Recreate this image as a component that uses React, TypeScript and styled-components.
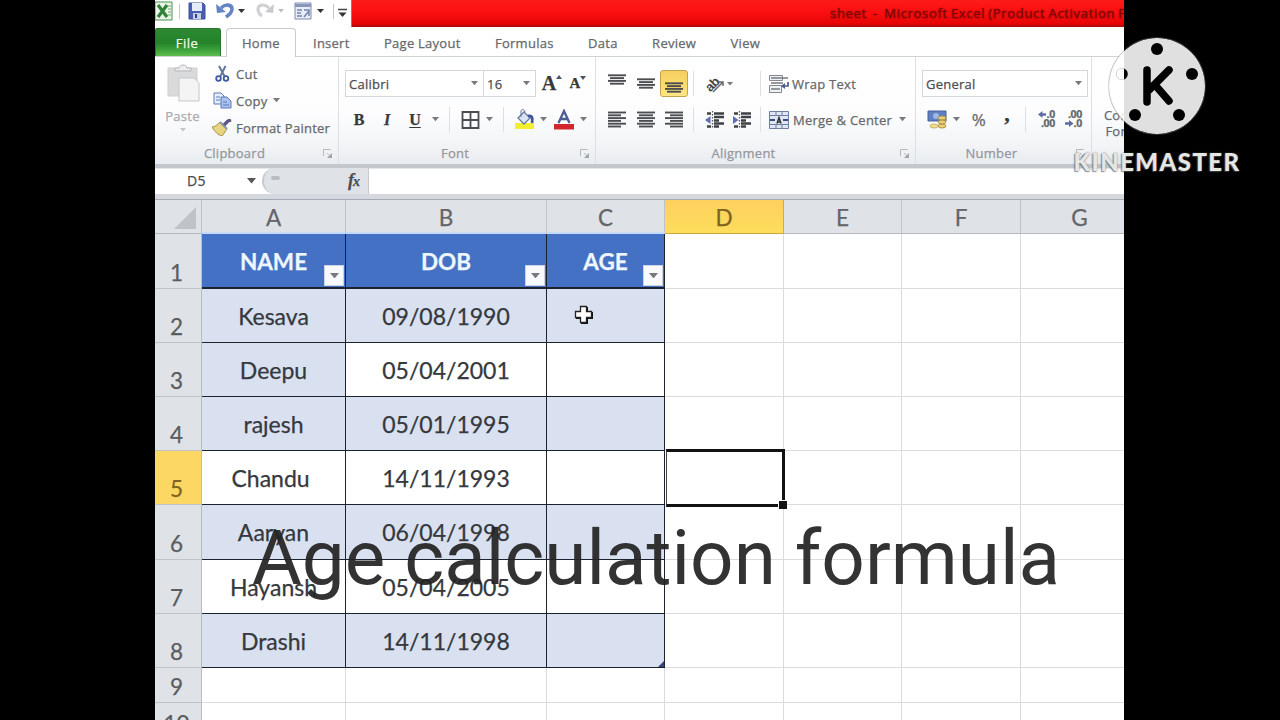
import React from 'react';
import styled, { createGlobalStyle, css } from 'styled-components';

const Global = createGlobalStyle`
  * { box-sizing: border-box; }
  body { margin: 0; background: #000; overflow: hidden; }
`;

const ui = `'Open Sans', 'Noto Sans', sans-serif`;
const sheetFont = `Lato, 'Liberation Sans', sans-serif`;

const Stage = styled.div`
  position: relative;
  width: 1280px;
  height: 720px;
  overflow: hidden;
  background: #000;
  padding-left: 155px;
`;
const Excel = styled.div`
  width: 969px;
  height: 720px;
  overflow: hidden;
  background: #fff;
  display: flex;
  flex-direction: column;
  font: 13px/16px ${ui};
  letter-spacing: 0.25px;
  -webkit-text-stroke: 0.25px currentColor;
  color: #66686c;
  white-space: nowrap;
`;

/* Title bar */
const TitleBar = styled.div`
  display: flex;
  height: 28px;
  flex: none;
`;
const QuickAccess = styled.div`
  width: 196px;
  height: 28px;
  display: flex;
  align-items: flex-start;
  svg { display: block; flex: none; }
`;
const Title = styled.div`
  flex: 1;
  height: 27px;
  padding: 5px 0 0 478px;
  overflow: hidden;
  background: linear-gradient(#ff1a1a, #fb1010 45%, #e60505 88%, #a80a0a);
  border-left: 1px solid #c96a6a;
  color: #7c0808;
  letter-spacing: 0.68px;
  word-spacing: -0.9px;
  text-shadow: 0 0 2px #a00000;
`;

/* Tabs */
const TabStrip = styled.div`
  display: flex;
  height: 29px;
  flex: none;
  border-bottom: 1px solid #cfd2d6;
`;
const FileTab = styled.div`
  width: 66px;
  height: 28px;
  margin-right: 5px;
  padding: 6px 2px 0 0;
  text-align: center;
  color: #eefbe9;
  letter-spacing: 0.5px;
  border-radius: 2px 3px 0 0;
  border: 1px solid #23772a;
  border-bottom: 0;
  background: linear-gradient(#2d8a33, #23822a 50%, #3fa53c 80%, #5fbd4e);
`;
const Tab = styled.div<{ $active?: boolean }>`
  height: 29px;
  padding: 7px 17.5px 0 17px;
  ${p => p.$active && css`
    width: 70px;
    padding: 6px 0 0 15px;
    background: #fff;
    border: 1px solid #c8cbd0;
    border-bottom: 0;
    border-radius: 4px 4px 0 0;
  `}
`;

/* Ribbon */
const Ribbon = styled.div`
  display: flex;
  flex: none;
  height: 107px;
  background: linear-gradient(#fff, #fdfdfe 50%, #f3f5f7 80%, #e9ecf0);
`;
const Group = styled.div<{ $w: number; $pad?: number }>`
  width: ${p => p.$w}px;
  flex: none;
  padding: 13px 0 0 ${p => p.$pad ?? 7}px;
  border-right: 1px solid #dcdfe3;
  display: flex;
  flex-direction: column;
`;
const Tools = styled.div`
  display: flex;
  align-items: center;
  height: 27px;
  margin-bottom: 9px;
  svg { display: block; flex: none; }
`;
const GroupFooter = styled.div<{ $pull?: number }>`
  display: flex;
  align-items: center;
  height: 21px;
  margin: auto 0 1px -${p => p.$pull ?? 7}px;
  color: #94979c;
`;
const GroupName = styled.span`
  flex: 1;
  text-align: center;
`;
const Slot = styled.span<{ $w: number; $on?: boolean }>`
  width: ${p => p.$w}px;
  height: 27px;
  flex: none;
  display: flex;
  align-items: center;
  justify-content: center;
  ${p => p.$on && css`
    border: 1px solid #c2a24f;
    border-radius: 3px;
    background: linear-gradient(#f6cf62, #fbdb6c 60%, #fde68a);
  `}
`;
const Letter = styled(Slot)<{ $size?: number; $italic?: boolean; $underline?: boolean }>`
  font: bold ${p => p.$size ?? 16}px 'Liberation Serif', serif;
  font-style: ${p => (p.$italic ? 'italic' : 'normal')};
  text-decoration: ${p => (p.$underline ? 'underline' : 'none')};
  text-underline-offset: 2px;
  color: #37383b;
  letter-spacing: 0;
`;
const Rule = styled.span`
  width: 1px;
  height: 25px;
  flex: none;
  background: #dcdfe3;
`;
const Gap = styled.span<{ $w: number }>`
  width: ${p => p.$w}px;
  flex: none;
`;
const Combo = styled.div<{ $w: number }>`
  width: ${p => p.$w}px;
  height: 27px;
  flex: none;
  display: flex;
  align-items: center;
  justify-content: space-between;
  padding: 0 5px 0 3px;
  margin-right: -1px;
  border: 1px solid #d3d6da;
  background: #fff;
  color: #4c4d50;
`;
const ClipboardBody = styled.div`
  display: flex;
  height: 82px;
  margin-top: -6px;
`;
const PasteButton = styled.div`
  width: 55px;
  display: flex;
  flex-direction: column;
  align-items: center;
  color: #a9abae;
  svg { display: block; }
`;
const PasteLabel = styled.span`
  margin: 4px 0 4px;
`;
const ClipList = styled.div`
  display: flex;
  flex-direction: column;
  margin-top: -4px;
`;
const ClipItem = styled.div`
  display: flex;
  align-items: center;
  height: 27px;
  svg { flex: none; }
`;
const ClipIcon = styled.span`
  display: flex;
  justify-content: center;
  width: 24px;
  margin-right: 2px;
`;
const Stacked = styled.div`
  width: 96px;
  flex: none;
  padding: 51px 0 0;
  text-align: center;
  line-height: 15.5px;
`;

/* Formula bar */
const FormulaBar = styled.div`
  display: flex;
  flex: none;
  height: 35px;
  border-top: 4px solid #c3c8ce;
  border-bottom: 5px solid #d5d9df;
  box-shadow: inset 0 1px 0 #e3e6ea;
`;
const NameBox = styled.div`
  width: 107px;
  padding: 0 6px 0 32px;
  display: flex;
  align-items: center;
  justify-content: space-between;
  font-size: 14px;
  color: #4c4d50;
`;
const FxArea = styled.div`
  width: 107px;
  display: flex;
  align-items: center;
  justify-content: space-between;
  padding: 0 9px 0 7px;
  background: #dfe3e8;
  border: 1px solid #c5cad0;
  border-width: 0 1px 0 2px;
  border-radius: 13px 0 0 13px;
`;
const Fx = styled.span`
  font: italic bold 18px/20px 'Liberation Serif', serif;
  letter-spacing: -1px;
  color: #4c4e52;
  small { font-size: 14px; }
`;
const Nub = styled.span`
  width: 9px;
  height: 4px;
  margin-top: -6px;
  border-radius: 2px;
  background: #b9bdc3;
`;

/* Sheet */
const Sheet = styled.div`
  display: flex;
  flex-direction: column;
  font-family: ${sheetFont};
  letter-spacing: 0;
  border-top: 1px solid #a5a9b0;
`;
const SheetRow = styled.div<{ $h: number }>`
  display: grid;
  grid-template-columns: 47px 144px 201px 118px 119px 118px 119px 118px;
  height: ${p => p.$h}px;
  flex: none;
`;
const ColHead = styled.div<{ $on?: boolean; $table?: boolean }>`
  display: flex;
  align-items: center;
  justify-content: center;
  padding-top: ${p => (p.$table ? 4 : 3)}px;
  font-size: 22.5px;
  color: ${p => (p.$on ? '#7d6420' : '#63656a')};
  background: ${p => (p.$on ? 'linear-gradient(#fdd05e, #fedd5c)' : '#dfe2e6')};
  border-right: 1px solid ${p => (p.$on ? '#d9a93a' : '#bfc3c9')};
  border-bottom: ${p => (p.$table ? '2px solid #c4daf6' : `1px solid ${p.$on ? '#cfa53d' : '#b5b9bf'}`)};
`;
const Corner = styled(ColHead)`
  justify-content: flex-end;
  align-items: flex-end;
  padding: 0 5px 4px 0;
`;
const RowHead = styled.div<{ $on?: boolean; $cut?: boolean }>`
  display: flex;
  align-items: flex-end;
  justify-content: center;
  padding: 0 3px ${p => (p.$cut ? 1 : 3)}px 0;
  font-size: 22.5px;
  line-height: 25px;
  color: ${p => (p.$on ? '#7d6420' : '#5a5c60')};
  background: ${p => (p.$on ? '#fdd763' : '#dfe2e6')};
  border-right: 1px solid #b9bdc3;
  border-bottom: 1px solid #c0c4ca;
`;
const Cell = styled.div<{ $kind: 'head' | 'band' | 'plain' | 'empty' }>`
  position: relative;
  display: flex;
  align-items: center;
  justify-content: center;
  font-size: 23px;
  color: #35383d;
  white-space: pre;
  border-right: 1px solid #dadcdf;
  border-bottom: 1px solid #dadcdf;
  ${p => p.$kind !== 'empty' && css`
    border-color: #1d232e;
    background: ${p.$kind === 'band' ? '#d9e1f0' : '#fff'};
  `}
  ${p => p.$kind === 'head' && css`
    background: #4471c4;
    color: #eef6ff;
    font-size: 22.5px;
    font-weight: 700;
    padding-top: 3px;
    border-bottom-width: 2px;
  `}
`;
const FilterButton = styled.span`
  position: absolute;
  right: 1px;
  bottom: 1px;
  width: 20px;
  height: 21px;
  display: flex;
  align-items: center;
  justify-content: center;
  background: #f7f9fc;
  border: 1px solid #c9d3e4;
`;
const Selection = styled.div`
  position: absolute;
  z-index: 1;
  left: 1px;
  top: -2px;
  width: 119px;
  height: 58px;
  border: 3px solid #121212;
  border-left: 1px solid #444;
  &::after {
    content: '';
    position: absolute;
    right: -5px;
    bottom: -5px;
    width: 8px;
    height: 8px;
    background: #121212;
    border: solid #fff;
    border-width: 1px 0 0 1px;
  }
`;
const TableGrip = styled.span`
  position: absolute;
  right: 0;
  bottom: 0;
  border: 3px solid #33437c;
  border-top-color: transparent;
  border-left-color: transparent;
`;
const CrossCursor = styled.svg`
  position: absolute;
  left: 26px;
  top: 15px;
`;

/* Video overlays */
const Caption = styled.div`
  position: absolute;
  left: 252px;
  top: 513px;
  font: 400 76.4px/90px Roboto, sans-serif;
  color: rgba(36, 36, 36, 0.93);
  white-space: nowrap;
`;
const Watermark = styled.div`
  position: absolute;
  left: 1067px;
  top: 34px;
  width: 180px;
  display: flex;
  flex-direction: column;
  align-items: center;
`;
const Brand = styled.div`
  margin-top: 8px;
  font: 900 24px/32px Lato, sans-serif;
  letter-spacing: 1.4px;
  color: #e6e6e6;
  text-shadow: 0 0 2px rgba(90, 90, 90, 0.8), -1px 1px 1px rgba(90, 90, 90, 0.6);
  white-space: nowrap;
`;

const PercentSign = styled.span`
  font-size: 17px;
`;
const Comma = styled.span`
  margin-top: -12px;
`;
const Decimals = styled.span`
  display: flex;
  flex-direction: column;
  align-items: flex-end;
  width: 20px;
  margin-top: -2px;
  font: bold 10.5px/9px 'Open Sans', sans-serif;
  letter-spacing: -0.3px;
`;
const DecimalRow = styled.span`
  display: flex;
  align-items: center;
`;

const Arrow = ({ w = 7, c = '#77797d' }: { w?: number; c?: string }) => (
  <svg width={w} height={w * 0.6} viewBox="0 0 10 6"><path d="M0 0h10L5 6z" fill={c} /></svg>
);
const Launcher = () => (
  <svg width="24" height="12" viewBox="0 0 24 12" fill="none" stroke="#b4b7bb">
    <path d="M9.500 9V2.500h7M13 6l4 4" /><path d="M18 6v5h-5z" fill="#a0a3a8" stroke="none" />
  </svg>
);
const ShiftArrow = ({ right }: { right?: boolean }) => (
  <svg width="9" height="7" viewBox="0 0 9 7">
    <path d={right ? 'M8.500 3.500L4 0v2.300H0v2.400h4V7z' : 'M0 3.500L4.500 0v2.300H8v2.400H4.500V7z'} fill="#5f6aa6" />
  </svg>
);

const lineSets: Record<string, number[][]> = {
  top: [[0, 18], [2, 16], [0, 18], [2, 16]],
  left: [[0, 18], [0, 13], [0, 18], [0, 13], [0, 18], [0, 13]],
  center: [[0, 18], [2, 16], [0, 18], [2, 16], [0, 18], [2, 16]],
  right: [[0, 18], [5, 18], [0, 18], [5, 18], [0, 18], [5, 18]],
};
const Lines = ({ kind, dy = 0 }: { kind: string; dy?: number }) => {
  const set = lineSets[kind];
  const step = 2.8;
  const y0 = (20 - (set.length - 1) * step) / 2 + dy;
  return (
    <svg width="18" height="27" viewBox="0 -3.5 18 27" stroke="#4b4d50" strokeWidth="1.9">
      {set.map(([a, b], i) => <path key={i} d={`M${a} ${y0 + i * step}H${b}`} />)}
    </svg>
  );
};
const Indent = ({ flip }: { flip?: boolean }) => (
  <svg width="20" height="18" viewBox="0 0 20 18" fill="none">
    <path d="M2 2.500h4M2 15.500h4M9 2.500h10M9 6h10M9 9.500h5M9 12.500h10M9 15.500h5" stroke="#3f4144" strokeWidth="2.300" />
    <path d={flip ? 'M6.500 9L1 5v8z' : 'M0 9l5.500-4v8z'} fill="#5f6fa8" />
    <path d="M7.500 0v18" stroke="#55575b" strokeWidth="1.300" strokeDasharray="1.500 1.500" />
  </svg>
);

const columns = ['A', 'B', 'C', 'D', 'E', 'F', 'G'];
type RowData = { h: number; kind: 'head' | 'band' | 'plain' | 'empty'; values?: string[] };
const rows: RowData[] = [
  { h: 55, kind: 'head', values: ['NAME', 'DOB', 'AGE'] },
  { h: 54, kind: 'band', values: ['Kesava', '09/08/1990', ''] },
  { h: 54, kind: 'plain', values: ['Deepu', '05/04/2001', ''] },
  { h: 54, kind: 'band', values: ['rajesh', '05/01/1995', ''] },
  { h: 54, kind: 'plain', values: ['Chandu ', '14/11/1993', ''] },
  { h: 55, kind: 'band', values: ['Aaryan', '06/04/1998', ''] },
  { h: 54, kind: 'plain', values: ['Hayansh', '05/04/2005', ''] },
  { h: 54, kind: 'band', values: ['Drashi', '14/11/1998', ''] },
  { h: 35, kind: 'empty' },
  { h: 35, kind: 'empty' },
];

export default function App() {
  return (
    <Stage>
      <Global />
      <Excel>
        <TitleBar>
          <QuickAccess>
            <svg width="196" height="28" viewBox="0 0 196 28" fill="none">
              <path d="M0 2h17v18H0z" fill="#e9f4e6" stroke="#4b9350" />
              <path d="M3 5l9 12M12 5L3 17" stroke="#2f8238" strokeWidth="3.200" />
              <path d="M13 6h3M13 9h3M13 12h3M13 15h3" stroke="#6fae72" />
              <path d="M24.500 4v15" stroke="#c4c6ca" />
              <path d="M34 3h14l2 2v14H34z" fill="#4a5fb4" stroke="#3d4e98" />
              <path d="M37 3h10v8H37z" fill="#e7ecfa" /><path d="M38 13h8v6h-8z" fill="#c7cfe8" /><path d="M40 14h2v4h-2z" fill="#33448d" />
              <path d="M66 8c5-5 11-3 11 1 0 4-3 6-6 8" stroke="#6484c4" strokeWidth="3.600" />
              <path d="M61 4l1 9 9-1z" fill="#6484c4" />
              <path d="M83 9h7l-3.500 4z" fill="#333" />
              <path d="M114 8c-5-5-11-3-11 1 0 3 1 5 4 7" stroke="#cfd1d4" strokeWidth="3.200" />
              <path d="M119 4l-1 9-8-1z" fill="#c8cace" />
              <path d="M123 9h6l-3 3.500z" fill="#bbb" />
              <path d="M140 3h16v16h-16z" fill="#e8eef8" stroke="#7c8cb0" />
              <path d="M140 5.500h16" stroke="#8796ba" strokeWidth="3" />
              <path d="M142 10h5M142 13h4M142 16h5M149 10h5v6M149 17l5-6" stroke="#7484ac" strokeWidth="1.500" />
              <path d="M162 9h7l-3.500 4z" fill="#333" />
              <path d="M178.500 4v15" stroke="#c4c6ca" />
              <path d="M183 9.500h9" stroke="#444" strokeWidth="1.500" /><path d="M183.500 12.500h8L187.500 17z" fill="#333" />
            </svg>
          </QuickAccess>
          <Title>sheet &nbsp;-&nbsp; Microsoft Excel (Product Activation Failed)</Title>
        </TitleBar>

        <TabStrip>
          <FileTab>File</FileTab>
          <Tab $active>Home</Tab>
          <Tab>Insert</Tab>
          <Tab>Page Layout</Tab>
          <Tab>Formulas</Tab>
          <Tab>Data</Tab>
          <Tab>Review</Tab>
          <Tab>View</Tab>
        </TabStrip>

        <Ribbon>
          <Group $w={184} $pad={0}>
            <ClipboardBody>
              <PasteButton>
                <svg width="34" height="40" viewBox="0 0 34 40" fill="none">
                  <path d="M2 4h29v28H2z" fill="#d9dadc" stroke="#cfd0d2" />
                  <path d="M9 7V4h4c0-4 8-4 8 0h4v3z" fill="#ececed" stroke="#b5b6b8" />
                  <path d="M13 14h15l5 5v18H13z" fill="#f4f4f5" stroke="#c5c6c8" />
                </svg>
                <PasteLabel>Paste</PasteLabel>
                <Arrow w={6} c="#c3c5c8" />
              </PasteButton>
              <ClipList>
                <ClipItem>
                  <ClipIcon>
                    <svg width="15" height="18" viewBox="0 0 15 18" fill="none">
                      <path d="M4 1l6 11M10.500 1L5 12" stroke="#63779f" strokeWidth="2" />
                      <circle cx="3.500" cy="13.500" r="2.300" stroke="#3d5d9f" strokeWidth="1.800" /><circle cx="11" cy="13.500" r="2.300" stroke="#3d5d9f" strokeWidth="1.800" />
                    </svg>
                  </ClipIcon>Cut
                </ClipItem>
                <ClipItem>
                  <ClipIcon>
                    <svg width="19" height="17" viewBox="0 0 19 17" stroke="#5c79b8">
                      <path d="M1 1h7l3 3v8H1z" fill="#e6eefb" /><path d="M8 5h6l4 4v7H8z" fill="#a9c2ee" />
                      <path d="M3 5h4M3 8h4M10 10h4M10 13h6" />
                    </svg>
                  </ClipIcon>Copy<Gap $w={6} /><Arrow />
                </ClipItem>
                <ClipItem>
                  <ClipIcon>
                    <svg width="20" height="17" viewBox="0 0 20 17">
                      <path d="M0 8c3 0 5-2 8-5l7 7-5 7C6 16 3 13 0 8z" fill="#e6d57c" stroke="#a8914a" />
                      <path d="M8 3l7 7" stroke="#8a93ad" strokeWidth="2" /><path d="M12 6l4-4 3-1" fill="none" stroke="#5c5484" strokeWidth="3.200" />
                    </svg>
                  </ClipIcon>Format Painter
                </ClipItem>
              </ClipList>
            </ClipboardBody>
            <GroupFooter $pull={0}><GroupName>Clipboard</GroupName><Launcher /></GroupFooter>
          </Group>

          <Group $w={257} $pad={6}>
            <Tools>
              <Combo $w={139}>Calibri<Arrow /></Combo>
              <Combo $w={53}>16<Arrow /></Combo>
              <Gap $w={7} />
              <Letter $w={14} $size={20}>A</Letter>
              <svg width="7" height="20" viewBox="0 0 7 20"><path d="M0 5h6L3 1z" fill="#4a5568" /></svg>
              <Gap $w={7} />
              <Letter $w={10} $size={15}>A</Letter>
              <svg width="7" height="20" viewBox="0 0 7 20"><path d="M0 2h6L3 6z" fill="#4a5568" /></svg>
            </Tools>
            <Tools>
              <Letter $w={28}>B</Letter>
              <Letter $w={28} $italic>I</Letter>
              <Letter $w={28} $underline>U</Letter>
              <Slot $w={13}><Arrow /></Slot>
              <Gap $w={7} /><Rule /><Gap $w={11} />
              <svg width="19" height="18" viewBox="0 0 19 18" fill="none" stroke="#4a4c50" strokeWidth="1.800"><path d="M1.500 1h16v16h-16zM9.500 1v16M1.500 9h16" /></svg>
              <Slot $w={19}><Arrow /></Slot>
              <Gap $w={4} /><Rule /><Gap $w={10} />
              <svg width="21" height="21" viewBox="0 0 21 21" fill="none">
                <path d="M1 14h19v6H1z" fill="#f2ee30" />
                <path d="M4 9l6-6 6 6-6 6z" fill="#dce4f2" stroke="#687a9e" strokeWidth="1.300" /><path d="M7 8V2c0-2 4-2 4 1" stroke="#687a9e" /><path d="M14 7c4-1 5 2 4 7" stroke="#3d539c" strokeWidth="2.800" />
              </svg>
              <Slot $w={16}><Arrow /></Slot>
              <Gap $w={3} />
              <svg width="20" height="21" viewBox="0 0 20 21" fill="none">
                <path d="M4.500 14L10 2l5.500 12M6.500 10h7" stroke="#4c5c94" strokeWidth="2.300" /><path d="M0 15h20v5.500H0z" fill="#d3262c" />
              </svg>
              <Slot $w={18}><Arrow /></Slot>
            </Tools>
            <GroupFooter $pull={6}><GroupName>Font</GroupName><Launcher /></GroupFooter>
          </Group>

          <Group $w={320} $pad={7}>
            <Tools>
              <Slot $w={28}><Lines kind="top" dy={-4} /></Slot>
              <Slot $w={29}><Lines kind="top" /></Slot>
              <Slot $w={28} $on><Lines kind="top" dy={4} /></Slot>
              <Gap $w={5} /><Rule /><Gap $w={11} />
              <svg width="20" height="20" viewBox="0 0 20 20" fill="none">
                <text x="0" y="14" transform="rotate(-45 8 10)" fontFamily="Liberation Sans" fontWeight="700" fontSize="13" letterSpacing="-0.5" fill="#444">ab</text>
                <path d="M8 18L18 8M14 8h4v4" stroke="#66686c" strokeWidth="1.500" />
              </svg>
              <Slot $w={9}><Arrow w={6} /></Slot>
              <Gap $w={26} /><Rule /><Gap $w={8} />
              <svg width="20" height="20" viewBox="0 0 20 20" fill="none">
                <path d="M.5 1.500h13v5H.5zM.5 11.500h12v7H.5z" fill="#eef1f6" stroke="#85888e" /><path d="M2 4h17M2 15h9M2 9h12" stroke="#777a80" strokeWidth="1.500" /><path d="M19 8v4h-5" stroke="#4e5b8c" strokeWidth="1.700" /><path d="M12 12l4-3v6z" fill="#4e5b8c" />
              </svg>
              <Gap $w={3} />Wrap Text
            </Tools>
            <Tools>
              <Slot $w={28}><Lines kind="left" /></Slot>
              <Slot $w={29}><Lines kind="center" /></Slot>
              <Slot $w={28}><Lines kind="right" /></Slot>
              <Gap $w={5} /><Rule /><Gap $w={11} />
              <Indent /><Gap $w={7} /><Indent flip />
              <Gap $w={8} /><Rule /><Gap $w={8} />
              <svg width="20" height="18" viewBox="0 0 20 18" fill="none">
                <path d="M.5.500h19v17H.5zM.5 4.500h19M.5 13.500h19M7 .5v4M13 .5v4M7 13.500v4M13 13.500v4" fill="#dfe6f4" stroke="#6f7f9f" />
                <path d="M1 9h5M14 9h5" stroke="#3c4c80" strokeWidth="2" /><path d="M8 12.500l2-6 2 6M8.500 11h3" stroke="#333" strokeWidth="1.500" />
              </svg>
              <Gap $w={4} />Merge &amp; Center<Gap $w={7} /><Arrow />
            </Tools>
            <GroupFooter><GroupName>Alignment</GroupName><Launcher /></GroupFooter>
          </Group>

          <Group $w={176} $pad={6}>
            <Tools>
              <Combo $w={166}>General<Arrow /></Combo>
            </Tools>
            <Tools>
              <Gap $w={5} />
              <svg width="21" height="21" viewBox="0 0 21 21" fill="none">
                <path d="M1 2h18v10H1z" fill="#5f7fc0" stroke="#47639c" /><circle cx="9" cy="7" r="3" fill="#9db6e4" />
                <ellipse cx="15" cy="9" rx="4" ry="2" fill="#e9cf78" stroke="#b0924a" /><ellipse cx="15" cy="13" rx="4" ry="2" fill="#e9cf78" stroke="#b0924a" /><ellipse cx="15" cy="17" rx="4" ry="2" fill="#e9cf78" stroke="#b0924a" /><ellipse cx="7" cy="17" rx="4" ry="2" fill="#f3dd92" stroke="#c9ae68" />
              </svg>
              <Slot $w={17}><Arrow /></Slot>
              <Slot $w={28}><PercentSign>%</PercentSign></Slot>
              <Letter $w={28} $size={22}><Comma>,</Comma></Letter>
              <Gap $w={4} /><Rule /><Gap $w={9} />
              <Decimals><DecimalRow><ShiftArrow />.0</DecimalRow><DecimalRow>.00</DecimalRow></Decimals>
              <Gap $w={7} />
              <Decimals><DecimalRow>.00</DecimalRow><DecimalRow><ShiftArrow right />.0</DecimalRow></Decimals>
            </Tools>
            <GroupFooter $pull={6}><GroupName>Number</GroupName><Launcher /></GroupFooter>
          </Group>
          <Stacked><div>Conditional</div>Formatting</Stacked>
        </Ribbon>

        <FormulaBar>
          <NameBox>D5<Arrow w={9} c="#55575b" /></NameBox>
          <FxArea><Nub /><Fx>f<small>x</small></Fx></FxArea>
        </FormulaBar>

        <Sheet>
          <SheetRow $h={34}>
            <Corner>
              <svg width="22" height="22" viewBox="0 0 22 22"><path d="M22 0v22H0z" fill="#bfc3c8" /></svg>
            </Corner>
            {columns.map((c, i) => <ColHead key={c} $on={c === 'D'} $table={i < 3}>{c}</ColHead>)}
          </SheetRow>
          {rows.map((row, r) => (
            <SheetRow key={r} $h={row.h}>
              <RowHead $on={r === 4} $cut={r === 9}>{r + 1}</RowHead>
              {columns.map((c, i) => {
                const inTable = i < 3 && row.values;
                const kind = !inTable ? 'empty' : r === 2 && i === 0 ? 'band' : row.kind;
                return (
                  <Cell key={c} $kind={kind}>
                    {inTable && row.values![i]}
                    {kind === 'head' && <FilterButton><Arrow w={9} /></FilterButton>}
                    {r === 1 && i === 2 && (
                      <CrossCursor width="22" height="22" viewBox="0 0 22 22">
                        <path d="M8 3h7v5h5v7h-5v5H8v-5H3V8h5z" fill="#111" />
                        <path d="M7.500 2.500h6v5h5v6h-5v5h-6v-5h-5v-6h5z" fill="#fff" stroke="#222" strokeWidth="1.300" />
                      </CrossCursor>
                    )}
                    {r === 4 && c === 'D' && <Selection />}
                    {r === 7 && c === 'C' && <TableGrip />}
                  </Cell>
                );
              })}
            </SheetRow>
          ))}
        </Sheet>
      </Excel>

      <Caption>Age calculation formula</Caption>

      <Watermark>
        <svg width="104" height="104" viewBox="-52 -52 104 104">
          <defs>
            <mask id="reel">
              <circle r="48" fill="#fff" />
              <g fill="#000">
                <circle cx="0" cy="-37" r="6" /><circle cx="35" cy="-12" r="6" /><circle cx="22" cy="29" r="6" /><circle cx="-22" cy="29" r="6" /><circle cx="-35" cy="-12" r="6" />
              </g>
              <path d="M-10-16V16M12-16L-8 4M-1 0L12 15" fill="none" stroke="#000" strokeWidth="7.500" strokeLinecap="round" strokeLinejoin="round" />
            </mask>
          </defs>
          <circle r="48" fill="none" stroke="#8a8a8a" strokeOpacity="0.450" strokeWidth="1.500" />
          <circle cx="-35" cy="-12" r="6" fill="none" stroke="#8a8a8a" strokeOpacity="0.600" />
          <g mask="url(#reel)"><circle r="48" fill="#fff" fillOpacity="0.880" /></g>
        </svg>
        <Brand>KINEMASTER</Brand>
      </Watermark>
    </Stage>
  );
}
